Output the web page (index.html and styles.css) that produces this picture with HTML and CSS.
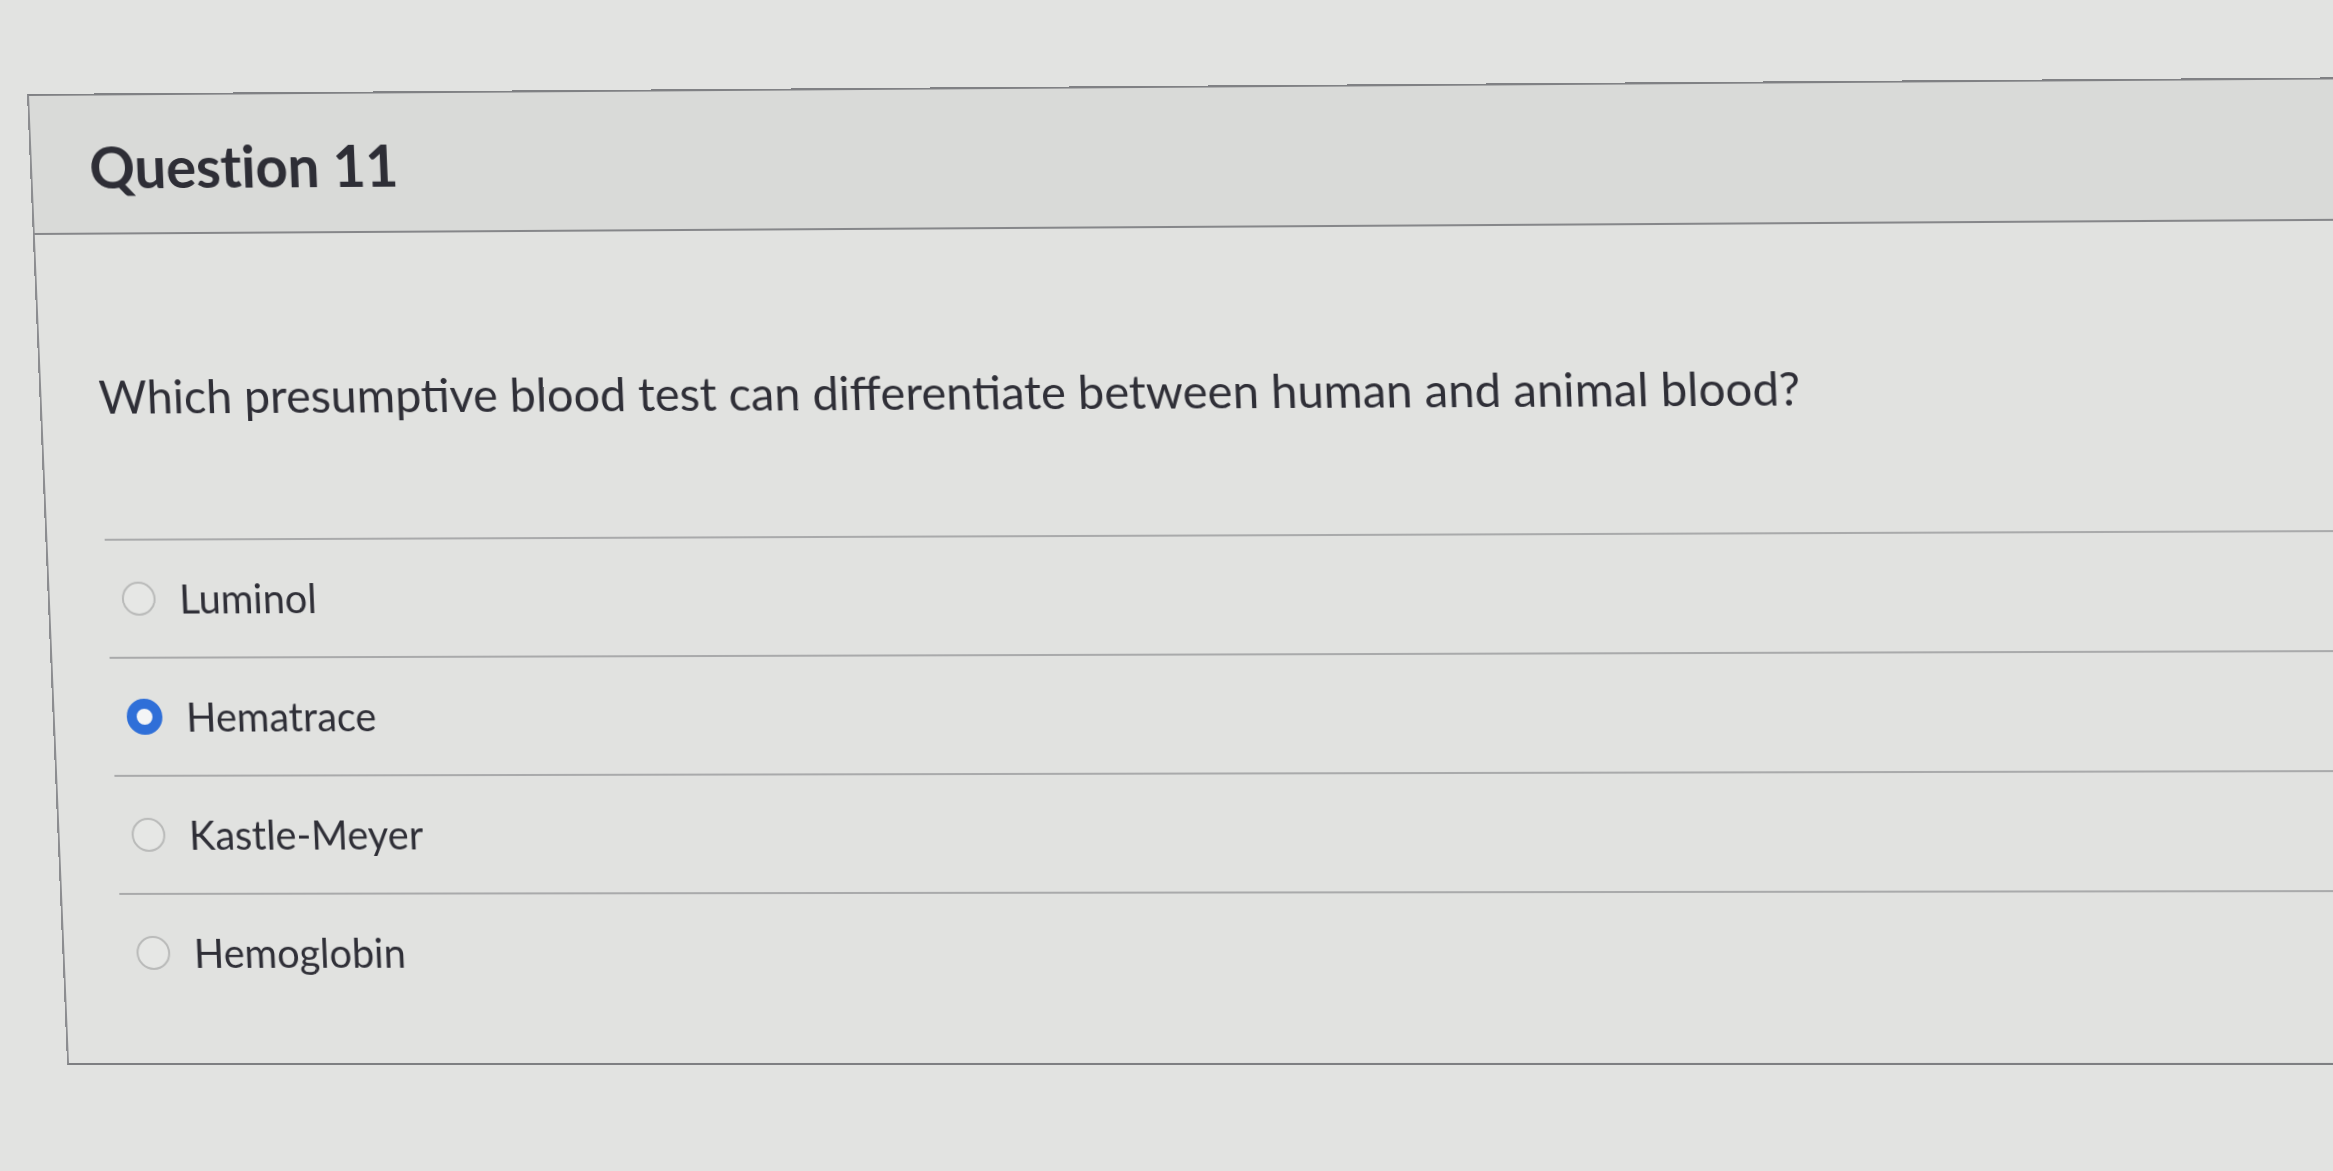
FILE: index.html
```html
<!DOCTYPE html>
<html lang="en">
<head>
<meta charset="utf-8">
<title>Question 11</title>
<link rel="stylesheet" href="styles.css">
</head>
<body>
<div class="page">
  <section class="card">
    <header class="card-head">
      <h2 class="title">Question 11</h2>
    </header>
    <div class="card-body">
      <p class="prompt">Which presumptive blood test can differentiate between human and animal blood?</p>
      <ul class="answers">
        <li class="answer"><span class="radio"></span><span class="label">Luminol</span></li>
        <li class="answer"><span class="radio checked"></span><span class="label">Hematrace</span></li>
        <li class="answer"><span class="radio"></span><span class="label">Kastle-Meyer</span></li>
        <li class="answer"><span class="radio"></span><span class="label">Hemoglobin</span></li>
      </ul>
    </div>
  </section>
</div>
</body>
</html>
```

FILE: styles.css
```css
html, body {
  margin: 0;
  padding: 0;
}
body {
  width: 2333px;
  height: 1171px;
  overflow: hidden;
  background: #e2e3e1;
  font-family: Lato, "Open Sans", "Liberation Sans", sans-serif;
  color: #2f2f37;
}
.page {
  padding: 94px 0 0 27px;
}
.card {
  width: 2420px;
  border-top: 2px solid #808184;
  border-left: 2px solid #8c8d90;
  border-bottom: 2px solid #7e7f82;
  background: #e1e2e0;
  transform-origin: 0 0;
  transform: matrix3d(0.987, -0.0071, 0, -0.0000073, 0.0413, 1, 0, 0, 0, 0, 1, 0, 0, 0, 0, 1);
}
.card-head {
  height: 137px;
  display: flex;
  align-items: center;
  padding-left: 58px;
  background: #d9dad8;
  border-bottom: 2px solid #86878a;
}
.title {
  margin: 4px 0 0 0;
  font-size: 57px;
  font-weight: 700;
  line-height: 68px;
  color: #2e2e36;
  letter-spacing: -0.2px;
}
.card-body {
  padding: 0 0 52px 58px;
}
.prompt {
  margin: 128px 0 0 0;
  font-size: 47px;
  line-height: 66px;
  font-weight: 400;
  color: #2f2f37;
}
.answers {
  list-style: none;
  margin: 110px 0 0 0;
  padding: 0;
}
.answer {
  height: 116px;
  display: flex;
  align-items: center;
  gap: 24px;
  padding-left: 15px;
  border-top: 2px solid #a9aaab;
}
.radio {
  width: 30px;
  height: 30px;
  border-radius: 50%;
  border: 2px solid #b9bab9;
  background: #e6e7e5;
  flex: none;
}
.radio.checked {
  width: 16px;
  height: 16px;
  border: 10px solid #2f6fd8;
  background: #f4f5f6;
}
.label {
  font-size: 40px;
  line-height: 48px;
  color: #2f2f37;
}
```
